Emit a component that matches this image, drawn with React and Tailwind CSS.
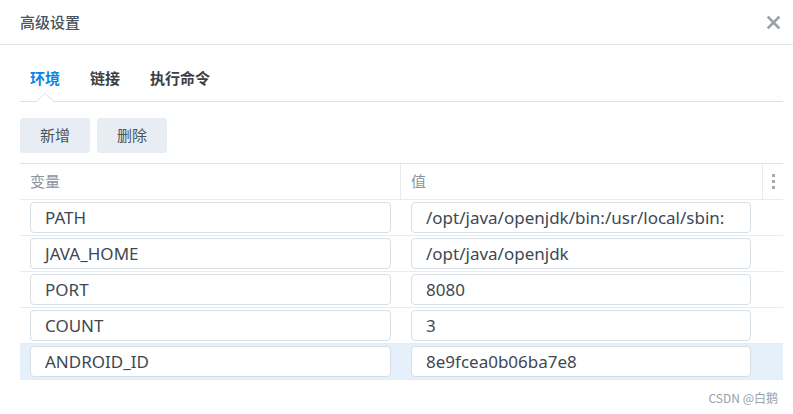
import React from 'react';

const rows = [
  { key: 'PATH', value: '/opt/java/openjdk/bin:/usr/local/sbin:' },
  { key: 'JAVA_HOME', value: '/opt/java/openjdk' },
  { key: 'PORT', value: '8080' },
  { key: 'COUNT', value: '3' },
  { key: 'ANDROID_ID', value: '8e9fcea0b06ba7e8', selected: true },
];

const cjk = { fontFamily: '"Noto Sans CJK SC", "Noto Sans", sans-serif' };
const latin = { fontFamily: '"Noto Sans", "Noto Sans CJK SC", sans-serif' };

const App = () => {
  return (
    <div className="w-[793px] h-[414px] bg-white relative overflow-hidden" style={cjk}>
      {/* Header */}
      <div className="h-[45px] flex items-center justify-between pl-5 pr-[13px] border-b border-[#dfe5ec]">
        <span className="text-[15px] font-medium text-[#48525c]">高级设置</span>
        <svg width="13" height="13" viewBox="0 0 13 13">
          <path d="M1.5 1.5 L11.5 11.5 M11.5 1.5 L1.5 11.5" stroke="#9aa1a8" strokeWidth="2.6" strokeLinecap="square" />
        </svg>
      </div>

      <div className="pl-5 pr-[10px]">
        {/* Tabs */}
        <div className="relative h-[57px] flex items-end border-b border-[#d9e0e8]">
          <div className="flex gap-[30px] pl-[10px] pb-[12px] text-[15px] font-bold">
            <span className="text-[#0a86e6]">环境</span>
            <span className="text-[#3a3f45]">链接</span>
            <span className="text-[#3a3f45]">执行命令</span>
          </div>
          <svg className="absolute left-[16px] bottom-[-1px]" width="18" height="9" viewBox="0 0 18 9">
            <path d="M0 8.5 L9 0.5 L18 8.5" fill="white" stroke="#d9e0e8" strokeWidth="1" />
            <rect x="1" y="8" width="16" height="1" fill="white" />
          </svg>
        </div>

        {/* Buttons */}
        <div className="flex gap-[7px] pt-[16px] pb-[10px]">
          <button className="w-[70px] h-[35px] rounded-[3px] bg-[#e8edf3] text-[15px] text-[#48525c]">新增</button>
          <button className="w-[70px] h-[35px] rounded-[3px] bg-[#e8edf3] text-[15px] text-[#48525c]">删除</button>
        </div>

        {/* Table */}
        <div className="border-t border-[#dfe5ec]">
          <div className="flex h-[36px] border-b border-[#e6ebf0] text-[15px] text-[#8a949e]">
            <div className="w-[381px] flex items-center pl-[10px] border-r border-[#e6ebf0]">变量</div>
            <div className="w-[362px] flex items-center pl-[10px] border-r border-[#e6ebf0]">值</div>
            <div className="flex-1 flex items-center justify-center">
              <div className="flex flex-col gap-[3px]">
                <span className="w-[3px] h-[3px] bg-[#a3abb3]" />
                <span className="w-[3px] h-[3px] bg-[#a3abb3]" />
                <span className="w-[3px] h-[3px] bg-[#a3abb3]" />
              </div>
            </div>
          </div>
          {rows.map((r) => (
            <div
              key={r.key}
              className={`flex h-[36px] items-center border-b border-[#e6ebf0] ${r.selected ? 'bg-[#e6f0fb]' : ''}`}
            >
              <div className="w-[381px] pl-[10px] pr-[10px]">
                <div
                  className="h-[31px] rounded-[4px] border border-[#d6dee6] bg-white px-[14px] flex items-center text-[17px] text-[#3e4852] overflow-hidden whitespace-nowrap"
                  style={latin}
                >
                  {r.key}
                </div>
              </div>
              <div className="w-[362px] pl-[10px] pr-[12px]">
                <div
                  className="h-[31px] rounded-[4px] border border-[#d6dee6] bg-white px-[14px] flex items-center text-[17px] text-[#3e4852] overflow-hidden whitespace-nowrap"
                  style={latin}
                >
                  {r.value}
                </div>
              </div>
              <div className="flex-1" />
            </div>
          ))}
        </div>
      </div>

      <div className="absolute right-[15px] bottom-[7px] text-[12px] text-[#9aa1a8]" style={cjk}>
        CSDN @白鹅
      </div>
    </div>
  );
};

export default App;
